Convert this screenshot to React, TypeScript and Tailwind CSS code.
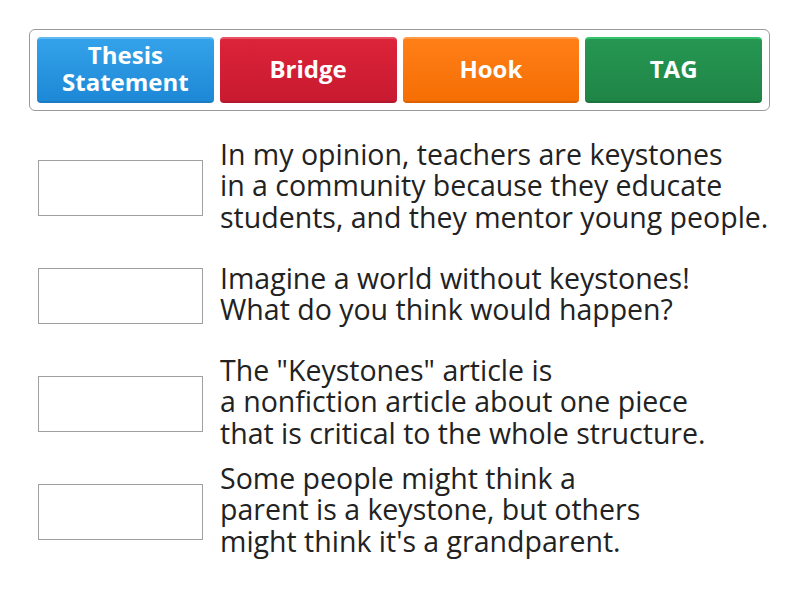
const tiles = [
  { label: ["Thesis", "Statement"], cls: "bg-gradient-to-b from-[#34a2ea] to-[#1d88d6] border-t-[#62b9f2] border-b-[#1a7cc4]" },
  { label: ["Bridge"], cls: "bg-gradient-to-b from-[#dc2339] to-[#c81a30] border-t-[#e45264] border-b-[#b3172b]" },
  { label: ["Hook"], cls: "bg-gradient-to-b from-[#ff7f16] to-[#f56e04] border-t-[#ff9b48] border-b-[#dc6200]" },
  { label: ["TAG"], cls: "bg-gradient-to-b from-[#269753] to-[#1f8546] border-t-[#34c56c] border-b-[#1b733d]" },
];

const rows = [
  ["In my opinion, teachers are keystones", "in a community because they educate", "students, and they mentor young people."],
  ["Imagine a world without keystones!", "What do you think would happen?"],
  ["The \"Keystones\" article is", "a nonfiction article about one piece", "that is critical to the whole structure."],
  ["Some people might think a", "parent is a keystone, but others", "might think it's a grandparent."],
];

export default function App() {
  return (
    <div className="w-[800px] h-[600px] bg-white pl-[29px] pt-[29px] font-['Open_Sans',sans-serif] text-[#222]">
      <div className="w-[741px] h-[82px] border border-[#9a9a9a] rounded-md flex gap-[6px] px-[7px] pt-[7px]">
        {tiles.map((t) => (
          <div
            key={t.label[0]}
            className={`w-[177px] h-[66px] rounded-[4px] border-t-2 border-b-2 pb-[4px] flex flex-col items-center justify-center text-white font-bold text-[24px] leading-[27px] ${t.cls}`}
          >
            {t.label.map((l) => (
              <span key={l}>{l}</span>
            ))}
          </div>
        ))}
      </div>
      <div className="mt-[23px] flex flex-col">
        {rows.map((r, i) => (
          <div key={i} className="h-[108px] flex items-center">
            <div className="ml-[9px] w-[165px] h-[56px] border border-[#a0a0a0] shrink-0" />
            <div className="ml-[17px] mb-[4px] text-[28.5px] leading-[31.5px] whitespace-nowrap">
              {r.map((l) => (
                <div key={l}>{l}</div>
              ))}
            </div>
          </div>
        ))}
      </div>
    </div>
  );
}
